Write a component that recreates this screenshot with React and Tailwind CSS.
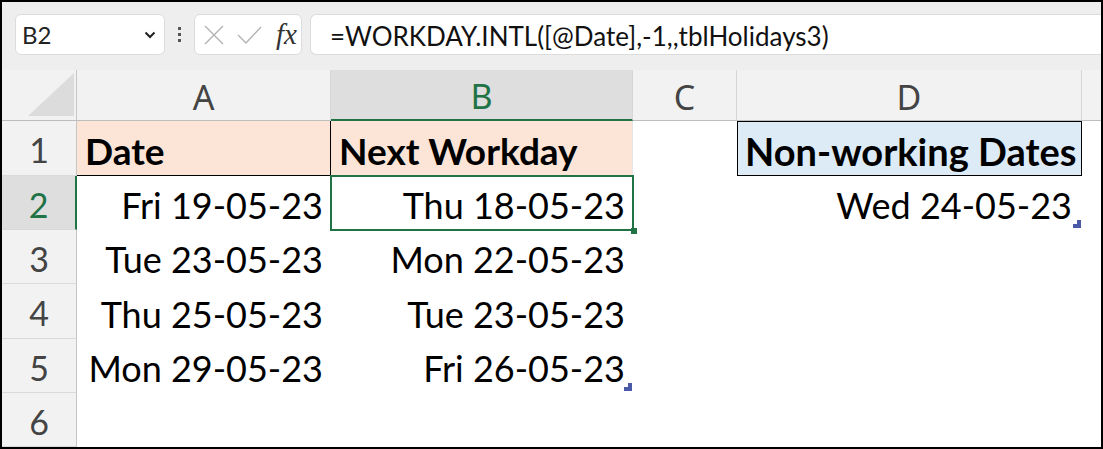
import React from "react";

const cellFont = { fontFamily: "Lato, 'Liberation Sans', sans-serif" };

const rows = [
  { n: 1, h: "h-[55px]" },
  { n: 2, h: "h-[54px]" },
  { n: 3, h: "h-[54px]" },
  { n: 4, h: "h-[55px]" },
  { n: 5, h: "h-[54px]" },
  { n: 6, h: "h-[54px]" },
];

const dates = {
  2: ["Fri 19-05-23", "Thu 18-05-23", "Wed 24-05-23"],
  3: ["Tue 23-05-23", "Mon 22-05-23", ""],
  4: ["Thu 25-05-23", "Tue 23-05-23", ""],
  5: ["Mon 29-05-23", "Fri 26-05-23", ""],
  6: ["", "", ""],
};

// small blue corner marking the end of a table
const TableHandle = () => (
  <svg className="absolute right-[1px] bottom-[2px]" width="8" height="8" viewBox="0 0 8 8">
    <path d="M4 0H8V8H0V4H4Z" fill="#4a5aa8" />
  </svg>
);

const Toolbar = () => (
  <div className="flex items-center h-[68px] bg-[#eeeeee] pl-[13px] pb-[3px]">
    <div className="flex items-center justify-between w-[150px] h-[41px] bg-white border border-[#dcdcdc] rounded-md pl-[6px] pr-[8px]">
      <span className="text-[24px] text-[#222]" style={cellFont}>B2</span>
      <svg width="12" height="8" viewBox="0 0 12 8">
        <path d="M1.5 1.5L6 6L10.5 1.5" stroke="#222" strokeWidth="2" fill="none" />
      </svg>
    </div>
    <div className="flex flex-col gap-[3px] mx-[13px]">
      <span className="w-[3px] h-[3px] bg-[#555]" />
      <span className="w-[3px] h-[3px] bg-[#555]" />
      <span className="w-[3px] h-[3px] bg-[#555]" />
    </div>
    <div className="flex items-center w-[108px] h-[41px] bg-white border border-[#dcdcdc] rounded-md pl-[9px]">
      <svg width="20" height="20" viewBox="0 0 20 20">
        <path d="M1 1L19 19M19 1L1 19" stroke="#b3b3b3" strokeWidth="1.4" fill="none" />
      </svg>
      <svg className="ml-[13px]" width="25" height="18" viewBox="0 0 25 18">
        <path d="M1 9L9 17L24 1" stroke="#b3b3b3" strokeWidth="1.4" fill="none" />
      </svg>
      <span className="ml-[14px] text-[29px] italic text-[#333] leading-none" style={{ fontFamily: "'Liberation Serif', serif" }}>fx</span>
    </div>
    <div className="flex-1 flex items-center h-[41px] ml-[8px] bg-white border border-r-0 border-[#dcdcdc] rounded-l-md pl-[19px]">
      <span className="text-[26px] text-[#111] pt-[3px]" style={cellFont}>=WORKDAY.INTL([@Date],-1,,tblHolidays3)</span>
    </div>
  </div>
);

const ColHeader = ({ label, sel, last }) => (
  <div
    className={`flex items-center justify-center pt-[4px] h-[51px] border-b ${last ? "" : "border-r border-r-[#d6d6d6]"} ${
      sel ? "bg-[#dedede] text-[#217346] border-b-2 border-b-[#217346]" : "bg-[#f2f2f2] text-[#444] border-b-[#bdbdbd]"
    } text-[34px]`}
    style={{ fontFamily: "'Noto Sans', 'Open Sans', sans-serif" }}
  >
    {label}
  </div>
);

const RowHeader = ({ n, h }) => (
  <div
    className={`flex items-center justify-center pt-[3px] ${h} border-b border-b-[#dadada] border-r ${
      n === 2 ? "bg-[#dedede] text-[#217346] border-r-2 border-r-[#217346]" : "bg-[#f2f2f2] text-[#444] border-r-[#c6c6c6]"
    } text-[34px]`}
    style={cellFont}
  >
    {n}
  </div>
);

export default function App() {
  return (
    <div className="w-[1103px] h-[449px] border-2 border-black bg-white overflow-hidden">
      <Toolbar />
      <div className="grid grid-cols-[75px_254px_302px_104px_345px_1fr]">
        <div className="relative h-[51px] bg-[#f2f2f2] border-r border-b border-r-[#c6c6c6] border-b-[#bdbdbd]">
          <svg className="absolute left-[26px] top-[3px]" width="46" height="43" viewBox="0 0 46 43">
            <path d="M0 43H46V0Z" fill="#dcdcdc" />
          </svg>
        </div>
        <ColHeader label="A" />
        <ColHeader label="B" sel />
        <ColHeader label="C" />
        <ColHeader label="D" />
        <ColHeader label="" last />

        {rows.map((r) => {
          if (r.n === 1) {
            return (
              <React.Fragment key={r.n}>
                <RowHeader n={1} h={r.h} />
                <div className={`${r.h} flex items-center pt-[5px] pl-[8px] bg-[#fce4d6] border-r border-b border-black text-[37px] font-bold text-black`} style={cellFont}>
                  Date
                </div>
                <div className={`${r.h} flex items-center pt-[5px] pl-[8px] bg-[#fce4d6] border-b border-r border-b-black border-r-[#e6e6e6] text-[37px] font-bold text-black`} style={cellFont}>
                  Next Workday
                </div>
                <div className={r.h} />
                <div className={`${r.h} flex items-center pt-[5px] pl-[7px] bg-[#ddebf7] border border-black text-[38px] font-bold text-black`} style={cellFont}>
                  Non-working Dates
                </div>
                <div className={r.h} />
              </React.Fragment>
            );
          }
          const [a, b, d] = dates[r.n];
          return (
            <React.Fragment key={r.n}>
              <RowHeader n={r.n} h={r.h} />
              <div className={`${r.h} flex items-center justify-end pt-[4px] pr-[8px] text-[36px] text-black`} style={cellFont}>
                {a}
              </div>
              <div className={`${r.h} relative flex items-center justify-end pt-[4px] pr-[8px] text-[36px] text-black`} style={cellFont}>
                {b}
                {r.n === 2 && (
                  <>
                    <div className="absolute -left-[1px] -top-[1px] -right-[1px] -bottom-[1px] border-2 border-[#217346]" />
                    <div className="absolute -right-[4px] -bottom-[4px] w-[6px] h-[6px] bg-[#217346]" />
                  </>
                )}
                {r.n === 5 && <TableHandle />}
              </div>
              <div className={r.h} />
              <div className={`${r.h} relative flex items-center justify-end pt-[4px] pr-[10px] text-[36px] text-black`} style={cellFont}>
                {d}
                {r.n === 2 && <TableHandle />}
              </div>
              <div className={r.h} />
            </React.Fragment>
          );
        })}
      </div>
    </div>
  );
}
